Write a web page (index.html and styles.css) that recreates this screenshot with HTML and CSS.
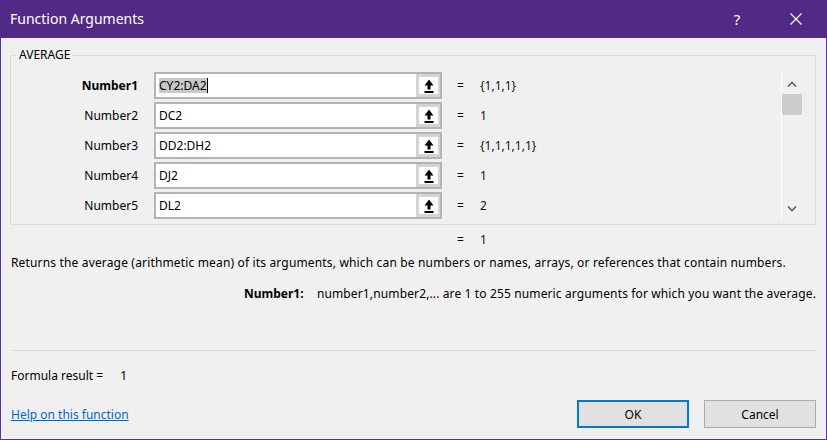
FILE: index.html
```html
<!DOCTYPE html>
<html>
<head>
<meta charset="utf-8">
<link rel="stylesheet" href="styles.css">
</head>
<body>
<div class="window">
  <div class="titlebar">
    <span class="title">Function Arguments</span>
    <span class="tb-help">?</span>
    <span class="tb-close"><svg width="12" height="12" viewBox="0 0 12 12"><path d="M0.5 0.5 L11.5 11.5 M11.5 0.5 L0.5 11.5" stroke="#fff" stroke-width="1.2" fill="none"/></svg></span>
  </div>
  <div class="content">
    <fieldset class="group">
      <legend class="legend">AVERAGE</legend>
      <div class="group-inner">
        <div class="rows">
          <div class="row">
            <span class="arg-label bold">Number1</span>
            <div class="field"><span class="field-text"><span class="sel">CY2:DA2</span><span class="caret"></span></span><span class="ref-btn"><svg width="18" height="18" viewBox="0 0 18 18"><path d="M4.5 8.5 L9 2.5 L13.5 8.5 Z M7.5 8 H10.5 V12.5 H7.5 Z M4.5 14 H13.5 V16 H4.5 Z" fill="#000"/></svg></span></div>
            <span class="eq">=</span><span class="val">{1,1,1}</span>
          </div>
          <div class="row">
            <span class="arg-label">Number2</span>
            <div class="field"><span class="field-text">DC2</span><span class="ref-btn"><svg width="18" height="18" viewBox="0 0 18 18"><path d="M4.5 8.5 L9 2.5 L13.5 8.5 Z M7.5 8 H10.5 V12.5 H7.5 Z M4.5 14 H13.5 V16 H4.5 Z" fill="#000"/></svg></span></div>
            <span class="eq">=</span><span class="val">1</span>
          </div>
          <div class="row">
            <span class="arg-label">Number3</span>
            <div class="field"><span class="field-text">DD2:DH2</span><span class="ref-btn"><svg width="18" height="18" viewBox="0 0 18 18"><path d="M4.5 8.5 L9 2.5 L13.5 8.5 Z M7.5 8 H10.5 V12.5 H7.5 Z M4.5 14 H13.5 V16 H4.5 Z" fill="#000"/></svg></span></div>
            <span class="eq">=</span><span class="val">{1,1,1,1,1}</span>
          </div>
          <div class="row">
            <span class="arg-label">Number4</span>
            <div class="field"><span class="field-text">DJ2</span><span class="ref-btn"><svg width="18" height="18" viewBox="0 0 18 18"><path d="M4.5 8.5 L9 2.5 L13.5 8.5 Z M7.5 8 H10.5 V12.5 H7.5 Z M4.5 14 H13.5 V16 H4.5 Z" fill="#000"/></svg></span></div>
            <span class="eq">=</span><span class="val">1</span>
          </div>
          <div class="row">
            <span class="arg-label">Number5</span>
            <div class="field"><span class="field-text">DL2</span><span class="ref-btn"><svg width="18" height="18" viewBox="0 0 18 18"><path d="M4.5 8.5 L9 2.5 L13.5 8.5 Z M7.5 8 H10.5 V12.5 H7.5 Z M4.5 14 H13.5 V16 H4.5 Z" fill="#000"/></svg></span></div>
            <span class="eq">=</span><span class="val">2</span>
          </div>
        </div>
        <div class="scrollbar">
          <span class="sb-arrow"><svg width="10" height="6" viewBox="0 0 10 6"><path d="M1 5.5 L5 1.5 L9 5.5" stroke="#606060" stroke-width="1.6" fill="none"/></svg></span>
          <span class="sb-thumb"></span>
          <span class="sb-track"></span>
          <span class="sb-arrow"><svg width="10" height="6" viewBox="0 0 10 6"><path d="M1 0.5 L5 4.5 L9 0.5" stroke="#606060" stroke-width="1.6" fill="none"/></svg></span>
        </div>
      </div>
    </fieldset>
    <div class="result-line"><span class="eq">=</span><span class="val">1</span></div>
    <p class="desc">Returns the average (arithmetic mean) of its arguments, which can be numbers or names, arrays, or references that contain numbers.</p>
    <div class="argdesc"><span class="argdesc-name">Number1:</span><span class="argdesc-text">number1,number2,... are 1 to 255 numeric arguments for which you want the average.</span></div>
    <div class="sep"></div>
    <div class="formula">Formula result = <span class="formula-val">1</span></div>
    <div class="footer">
      <a class="help" href="#">Help on this function</a>
      <div class="buttons">
        <button class="btn btn-primary">OK</button>
        <button class="btn">Cancel</button>
      </div>
    </div>
  </div>
</div>
</body>
</html>
```

FILE: styles.css
```css
* { box-sizing: border-box; }
html, body { margin: 0; padding: 0; }
body {
  width: 827px;
  height: 440px;
  overflow: hidden;
  font-family: "Noto Sans", "Open Sans", sans-serif;
  font-size: 12px;
  color: #000;
}
.window {
  width: 827px;
  height: 440px;
  background: #5c3494;
  display: flex;
  flex-direction: column;
}
.titlebar {
  height: 38px;
  background: #522985;
  color: #fff;
  display: flex;
  align-items: center;
  padding-left: 10px;
  flex: none;
}
.title {
  font-size: 14px;
  flex: 1;
  padding-bottom: 1px;
}
.tb-help {
  font-size: 15px;
  width: 14px;
  margin-right: 46px;
  text-align: center;
}
.tb-close {
  width: 12px;
  height: 12px;
  margin-right: 25px;
  display: flex;
}
.content {
  flex: 1;
  background: #f0f0f0;
  margin: 0 1px 1px 1px;
  padding: 9px 10px 0 9px;
  display: flex;
  flex-direction: column;
}
.group {
  margin: 0;
  border: 1px solid #dcdcdc;
  padding: 9px 13px 5px 0;
  min-width: 0;
}
.legend {
  padding: 0 2px;
  margin-left: 6px;
  line-height: 16px;
}
.group-inner {
  display: flex;
}
.rows {
  flex: 1;
  display: flex;
  flex-direction: column;
  gap: 3px;
}
.row {
  display: flex;
  align-items: center;
  height: 27px;
}
.arg-label {
  width: 127px;
  text-align: right;
  margin-right: 16px;
}
.bold { font-weight: bold; }
.field {
  width: 288px;
  height: 27px;
  border: 2px solid #b4b4b4;
  background: #fff;
  display: flex;
  align-items: center;
}
.field-text {
  flex: 1;
  padding-left: 3px;
  display: flex;
  align-items: center;
}
.sel {
  background: #c8c8c8;
  line-height: 15px;
}
.caret {
  width: 1px;
  height: 15px;
  background: #000;
}
.ref-btn {
  width: 24px;
  height: 23px;
  border: 3px solid #d4d4d4;
  border-right-width: 2px;
  background: #fff;
  display: flex;
  align-items: center;
  justify-content: center;
}
.ref-btn svg { display: block; }
.eq {
  width: 23px;
  margin-left: 15px;
}
.val { color: #1a1208; }
.scrollbar {
  width: 21px;
  margin-top: 1px;
  border-left: 1px solid #fff;
  display: flex;
  flex-direction: column;
  align-items: center;
}
.sb-arrow {
  height: 21px;
  display: flex;
  align-items: center;
  justify-content: center;
}
.sb-thumb {
  width: 20px;
  height: 21px;
  background: #cdcdcd;
}
.sb-track { flex: 1; }
.result-line {
  display: flex;
  margin-top: 7px;
  line-height: 16px;
  padding-left: 447px;
}
.result-line .eq { margin-left: 0; }
.desc {
  margin: 7px 0 0 0;
  line-height: 16px;
  padding-left: 1px;
  letter-spacing: 0.16px;
}
.argdesc {
  margin-top: 15px;
  line-height: 16px;
  display: flex;
  padding-left: 234px;
  white-space: nowrap;
}
.argdesc-name {
  font-weight: bold;
  width: 75px;
}
.argdesc-text { letter-spacing: 0.13px; }
.sep {
  margin-top: 48px;
  height: 1px;
  background: #dcdcdc;
  margin-left: 1px;
}
.formula {
  margin-top: 17px;
  line-height: 16px;
  padding-left: 1px;
}
.formula-val { margin-left: 14px; }
.footer {
  margin-top: 16px;
  display: flex;
  align-items: center;
  justify-content: space-between;
  padding-left: 1px;
}
.help {
  color: #0066cc;
  text-decoration: underline;
}
.buttons {
  display: flex;
  gap: 15px;
}
.btn {
  width: 112px;
  height: 28px;
  background: #e1e1e1;
  border: 1px solid #adadad;
  font-family: inherit;
  font-size: 12px;
  color: #000;
  padding: 0;
}
.btn-primary {
  border: 2px solid #0078d7;
}
```
